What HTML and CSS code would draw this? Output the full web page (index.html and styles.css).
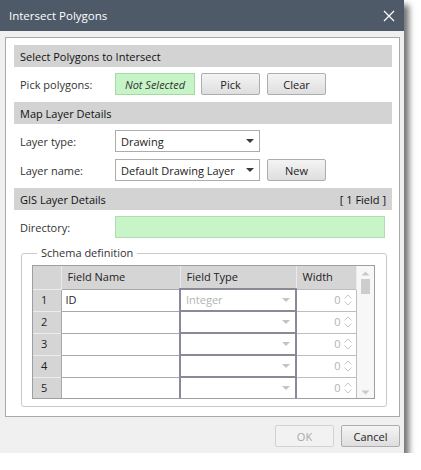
FILE: index.html
```html
<!DOCTYPE html>
<html lang="en">
<head>
    <meta charset="UTF-8">
    <meta name="viewport" content="width=device-width, initial-scale=1.0">
    <title>Intersect Polygons</title>
    <link rel="stylesheet" href="styles.css">
</head>
<body>
    <div class="dialog">
        <div class="titlebar">
            <span class="title">Intersect Polygons</span>
            <svg class="close" width="12" height="12" viewBox="0 0 12 12">
                <path d="M1 1 L11 11 M11 1 L1 11" stroke="#ffffff" stroke-width="1.2" fill="none"/>
            </svg>
        </div>
        <div class="body">
            <div class="panel">
                <div class="section-head">Select Polygons to Intersect</div>
                <div class="row">
                    <label class="row-label">Pick polygons:</label>
                    <div class="status">Not Selected</div>
                    <button class="btn">Pick</button>
                    <button class="btn btn-wide-gap">Clear</button>
                </div>

                <div class="section-head">Map Layer Details</div>
                <div class="row">
                    <label class="row-label">Layer type:</label>
                    <div class="select">Drawing<span class="caret"></span></div>
                </div>
                <div class="row">
                    <label class="row-label">Layer name:</label>
                    <div class="select">Default Drawing Layer<span class="caret"></span></div>
                    <button class="btn btn-wide-gap">New</button>
                </div>

                <div class="section-head section-split">
                    <span>GIS Layer Details</span>
                    <span>[ 1 Field ]</span>
                </div>
                <div class="row">
                    <label class="row-label">Directory:</label>
                    <div class="dir-input"></div>
                </div>

                <fieldset class="schema">
                    <legend>Schema definition</legend>
                    <div class="grid">
                        <table class="fields">
                            <colgroup>
                                <col class="c-num">
                                <col class="c-name">
                                <col class="c-type">
                                <col class="c-width">
                            </colgroup>
                            <thead>
                                <tr>
                                    <th></th>
                                    <th>Field Name</th>
                                    <th>Field Type</th>
                                    <th>Width</th>
                                </tr>
                            </thead>
                            <tbody id="rows"></tbody>
                        </table>
                        <div class="vscroll">
                            <svg class="arrow" width="9" height="5" viewBox="0 0 9 5"><path d="M0.5 4.5 L4.5 0.5 L8.5 4.5" fill="#c9c9c9"/></svg>
                            <div class="thumb"></div>
                            <div class="track"></div>
                            <svg class="arrow" width="9" height="5" viewBox="0 0 9 5"><path d="M0.5 0.5 L4.5 4.5 L8.5 0.5" fill="#c9c9c9"/></svg>
                        </div>
                    </div>
                </fieldset>
            </div>

            <div class="footer">
                <button class="btn" disabled>OK</button>
                <button class="btn">Cancel</button>
            </div>
        </div>
    </div>

    <script>
const rows = document.getElementById('rows')
const data = [
    {name: 'ID', type: 'Integer'},
    {name: '', type: ''},
    {name: '', type: ''},
    {name: '', type: ''},
    {name: '', type: ''}
]

const spin = '<svg class="spin" width="8" height="12" viewBox="0 0 8 12"><path d="M0.5 4.5 L4 1 L7.5 4.5" stroke="#c6c6c6" fill="none"/><path d="M0.5 7.5 L4 11 L7.5 7.5" stroke="#c6c6c6" fill="none"/></svg>'

data.forEach((field, i) => {
    const tr = document.createElement('tr')
    tr.innerHTML =
        '<td class="num">' + (i + 1) + '</td>' +
        '<td class="name">' + field.name + '</td>' +
        '<td class="type"><div class="cell-in"><span>' + field.type + '</span><span class="mini-caret"></span></div></td>' +
        '<td class="width"><div class="cell-in cell-end"><span>0</span>' + spin + '</div></td>'
    rows.appendChild(tr)
})
    </script>
</body>
</html>
```

FILE: styles.css
```css
body{
    margin:0;
    background:#ffffff;
    font-family: "Open Sans", "Noto Sans", sans-serif;
    font-size:11px;
    color:#1e1e1e;
}

.dialog{
    width:404px;
    background:#f0f0f0;
    box-shadow: 5px 5px 6px rgba(0,0,0,0.55);
}

.titlebar{
    height:31px;
    background:#4f5a69;
    display:flex;
    align-items:center;
    justify-content:space-between;
    padding:0 9px 0 9px;
    box-sizing:border-box;
}
.title{
    color:#ffffff;
    font-size:11.5px;
}

.body{
    padding:6px 4px 6px 5px;
}

.panel{
    background:#ffffff;
    border:1px solid #a9a9a9;
    padding:7px 7px 9px 8px;
}

.section-head{
    height:22px;
    background:#d3d3d3;
    display:flex;
    align-items:center;
    padding:0 6px;
    color:#111;
}
.section-split{
    justify-content:space-between;
}

.row{
    display:flex;
    align-items:center;
    height:22px;
    margin:6px 0 7px;
}
.row-label{
    width:101px;
    box-sizing:border-box;
    padding-left:6px;
    color:#333;
}

.status{
    width:80px;
    height:22px;
    box-sizing:border-box;
    background:#c6f4c6;
    border:1px solid #a6d9a6;
    font-style:italic;
    display:flex;
    align-items:center;
    justify-content:center;
    color:#333;
}

.btn{
    width:59px;
    height:22px;
    margin-left:6px;
    font-family:inherit;
    font-size:11px;
    color:#222;
    border:1px solid #adadad;
    border-radius:2px;
    background:linear-gradient(#f4f4f4, #dedede);
    padding:0;
}
.btn-wide-gap{
    margin-left:7px;
}
.btn:disabled{
    color:#a8a8a8;
    border-color:#d2d2d2;
    background:#f2f2f2;
}

.select{
    width:145px;
    height:22px;
    box-sizing:border-box;
    border:1px solid #acacac;
    background:#fff;
    display:flex;
    align-items:center;
    padding-left:5px;
    color:#222;
}
.caret{
    margin-left:auto;
    margin-right:5px;
    width:0;
    height:0;
    border-left:4px solid transparent;
    border-right:4px solid transparent;
    border-top:4px solid #3a3a3a;
}

.dir-input{
    width:270px;
    height:22px;
    box-sizing:border-box;
    background:#c8f5c8;
    border:1px solid #b3dcb3;
}

.schema{
    margin:6px 7px 0;
    padding:4px 11px 7px 10px;
    border:1px solid #c9c9c9;
    border-radius:3px;
}
.schema legend{
    padding:0 4px;
    margin-left:5px;
    line-height:16px;
    color:#333;
}

.grid{
    display:flex;
    border:1px solid #9f9f9f;
    height:134px;
    box-sizing:border-box;
    overflow:hidden;
}

.fields{
    border-collapse:collapse;
    table-layout:fixed;
    width:323px;
    align-self:flex-start;
}
.c-num{ width:28px; }
.c-name{ width:119px; }
.c-type{ width:116px; }
.c-width{ width:60px; }

.fields thead tr{
    height:23px;
}
.fields tbody tr{
    height:22px;
}
.fields th{
    background:#d5d5d5;
    text-align:left;
    font-weight:normal;
    padding:0 0 0 6px;
    border-right:1px solid #eaeaea;
    color:#222;
    line-height:14px;
}
.fields td{
    padding:0;
    line-height:14px;
}
.fields td.num{
    background:#d5d5d5;
    border-top:1px solid #ececec;
    padding-left:8px;
}
.fields td.name{
    border:1px solid #a8a8a8;
    padding-left:4px;
}
.fields td.type{
    border:2px solid #898997;
    color:#b3b3b3;
    padding:0 5px;
}
.fields td.width{
    border:1px solid #bdbdbd;
    color:#b3b3b3;
    padding-right:4px;
}

.cell-in{
    display:flex;
    align-items:center;
    justify-content:space-between;
    height:16px;
}
.cell-end{
    justify-content:flex-end;
}
.mini-caret{
    width:0;
    height:0;
    border-left:4px solid transparent;
    border-right:4px solid transparent;
    border-top:4px solid #c4c4c4;
}
.spin{
    margin-left:3px;
}

.vscroll{
    width:17px;
    background:#f7f7f7;
    display:flex;
    flex-direction:column;
    align-items:center;
    padding:5px 0 3px;
    box-sizing:border-box;
}
.thumb{
    width:9px;
    height:15px;
    margin-top:3px;
    background:#cdcdcd;
}
.track{
    flex:1;
}

.footer{
    display:flex;
    justify-content:flex-end;
    gap:7px;
    padding-top:8px;
}
.footer .btn{
    margin:0;
}
```
